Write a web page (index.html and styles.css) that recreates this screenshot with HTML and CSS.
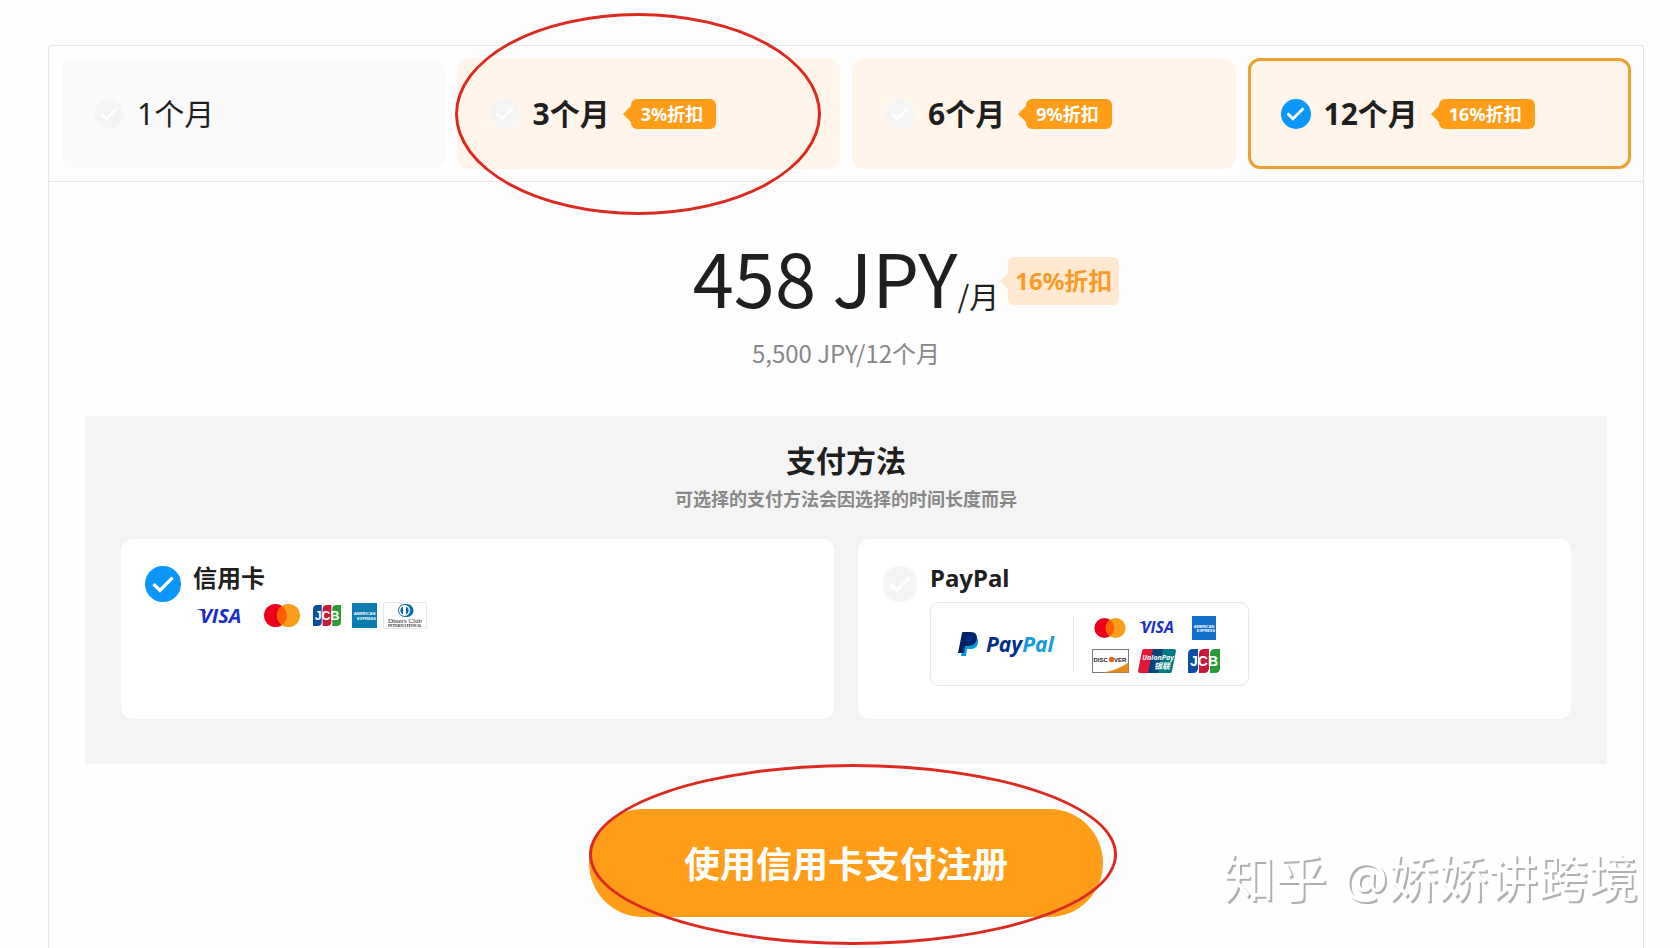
FILE: index.html
```html
<!DOCTYPE html>
<html lang="zh-CN">
<head>
  <meta charset="UTF-8" />
  <meta name="viewport" content="width=device-width, initial-scale=1">
  <title>支付方法</title>
  <link rel="stylesheet" href="styles.css">
</head>
<body>

  <!-- card brand logos, reused in both payment options -->
  <svg class="sprite" aria-hidden="true">
    <symbol id="visa" viewBox="0 0 48 16">
      <path d="M0 1h8l2 3-1 2C7 3 4 2 0 1z" fill="#1a2fc4" />
      <text x="4" y="15" class="visa-text">VISA</text>
    </symbol>
    <symbol id="mastercard" viewBox="0 0 36 23">
      <circle cx="11.5" cy="11.5" r="11.5" fill="#eb001b" />
      <circle cx="24.5" cy="11.5" r="11.5" fill="#f79e1b" />
      <path d="M18 2a11.5 11.5 0 0 1 0 19a11.5 11.5 0 0 1 0-19z" fill="#ff5f00" />
    </symbol>
    <symbol id="jcb" viewBox="0 0 32 24">
      <path d="M5 0h5v19q0 5-5 5H0V5q0-5 5-5z" fill="#0b4ea2" />
      <path d="M16 0h5v19q0 5-5 5h-5V5q0-5 5-5z" fill="#c8193c" />
      <path d="M27 0h5v19q0 5-5 5h-5V5q0-5 5-5z" fill="#2b9b3a" />
      <text x="16" y="17" text-anchor="middle" class="jcb-text">JCB</text>
    </symbol>
    <symbol id="amex" viewBox="0 0 25 25">
      <rect width="25" height="25" />
      <text x="12.5" y="12" text-anchor="middle" class="amex-text">AMERICAN</text>
      <text x="14.5" y="17" text-anchor="middle" class="amex-text">EXPRESS</text>
    </symbol>
    <symbol id="diners" viewBox="0 0 44 27">
      <rect x=".5" y=".5" width="43" height="26" rx="1" fill="#fff" stroke="#e6e6e6" />
      <path d="M21 2h3a6.500 6.500 0 0 1 0 13h-3z" fill="#0a6ba8" />
      <circle cx="21.500" cy="8.500" r="6" fill="#fff" stroke="#0a6ba8" />
      <path d="M20 4.500v8a4.300 4.300 0 0 1 0-8zM23 4.500v8a4.300 4.300 0 0 0 0-8z" fill="#0a6ba8" />
      <text x="22" y="20.500" text-anchor="middle" class="diners-text">Diners Club</text>
      <text x="22" y="25" text-anchor="middle" class="diners-small">INTERNATIONAL</text>
    </symbol>
    <symbol id="discover" viewBox="0 0 37 24">
      <rect x=".5" y=".5" width="36" height="23" fill="#fff" stroke="#777" />
      <path d="M36.500 13.500V23.500H11Q26 21 36.500 13.500z" fill="#e58a1c" />
      <text x="1.500" y="13" class="discover-text">DISC</text>
      <circle cx="19.500" cy="10.500" r="2.700" fill="#e8641b" />
      <text x="22" y="13" class="discover-text">VER</text>
    </symbol>
    <symbol id="unionpay" viewBox="0 0 38 24">
      <path d="M6 0h12l-5 24H2q-2 0-2-2L4 2q0-2 2-2z" fill="#e21836" />
      <path d="M15 0h12l-5 24H10z" fill="#00447c" />
      <path d="M25 0h11q2 0 2 2l-4 20q0 2-2 2H20z" fill="#007b84" />
      <text x="20" y="11" text-anchor="middle" class="union-text">UnionPay</text>
      <text x="24" y="20" text-anchor="middle" class="union-cn">银联</text>
    </symbol>
  </svg>

  <main class="panel">
    <div class="periods" role="radiogroup" aria-label="时间长度">
      <label class="period plain">
        <input type="radio" name="period" class="check">
        <span class="period-name">1个月</span>
      </label>
      <label class="period">
        <input type="radio" name="period" class="check">
        <span class="period-name">3个月</span>
        <span class="tag">3%折扣</span>
        <span class="ring ring-period"></span>
      </label>
      <label class="period">
        <input type="radio" name="period" class="check">
        <span class="period-name">6个月</span>
        <span class="tag">9%折扣</span>
      </label>
      <label class="period selected">
        <input type="radio" name="period" class="check" checked>
        <span class="period-name">12个月</span>
        <span class="tag">16%折扣</span>
      </label>
    </div>

    <div class="summary">
      <div class="price">
        458 JPY<span class="unit">/月</span>
        <span class="tag tag-light">16%折扣</span>
      </div>
      <div class="total">5,500 JPY/12个月</div>
    </div>

    <section class="payment">
      <h2>支付方法</h2>
      <p class="note">可选择的支付方法会因选择的时间长度而异</p>

      <div class="methods">
        <label class="method">
          <input type="radio" name="method" class="check check-large" checked>
          <span class="method-body">
            <span class="method-name">信用卡</span>
            <span class="cards">
              <svg class="logo visa"><use href="#visa" /></svg>
              <svg class="logo mastercard"><use href="#mastercard" /></svg>
              <svg class="logo jcb"><use href="#jcb" /></svg>
              <svg class="logo amex"><use href="#amex" /></svg>
              <svg class="logo diners"><use href="#diners" /></svg>
            </span>
          </span>
        </label>

        <label class="method">
          <input type="radio" name="method" class="check check-large">
          <span class="method-body">
            <span class="method-name">PayPal</span>
            <span class="paypal-box">
              <svg class="paypal-logo" viewBox="0 0 98 30">
                <path d="M7 7h8q6 1 5 7-1 6-8 6h-3l-1 7H3z" fill="#009cde" />
                <path d="M5 3h8q6 0 6 6-1 8-9 8H7l-1 7H0L4 4q0-1 1-1z" fill="#012169" />
                <path d="M9 7h4q2 0 2 3-1 3-4 3H8z" fill="#003087" />
                <text x="28" y="23" class="paypal-text"><tspan fill="#012f87">Pay</tspan><tspan fill="#139bdc">Pal</tspan></text>
              </svg>
              <span class="brands">
                <svg class="logo mastercard"><use href="#mastercard" /></svg>
                <svg class="logo visa"><use href="#visa" /></svg>
                <svg class="logo amex"><use href="#amex" /></svg>
                <svg class="logo discover"><use href="#discover" /></svg>
                <svg class="logo unionpay"><use href="#unionpay" /></svg>
                <svg class="logo jcb"><use href="#jcb" /></svg>
              </span>
            </span>
          </span>
        </label>
      </div>
    </section>

    <div class="action">
      <button type="submit" class="submit">使用信用卡支付注册</button>
      <span class="ring ring-submit"></span>
    </div>
  </main>

  <div class="watermark"><span class="site">知乎</span><span>@娇娇讲跨境</span></div>

</body>
</html>
```
FILE: styles.css
```css
* {
  box-sizing: border-box;
}

body {
  margin: 0;
  min-height: 100vh;
  padding: 45px 36px 0 48px;
  display: flex;
  position: relative;
  background: #fefefe;
  color: #1f1f1f;
  font-family: "Noto Sans", "Noto Sans CJK SC", sans-serif;
}

.sprite {
  display: none;
}

.panel {
  flex: 1;
  border: 1px solid #e6e6e6;
  border-bottom: none;
  border-radius: 3px 3px 0 0;
}

/* period tabs */
.periods {
  display: grid;
  grid-template-columns: repeat(4, 1fr);
  gap: 12px;
  padding: 12px;
  border-bottom: 1px solid #e6e6e6;
}

.period {
  position: relative;
  display: flex;
  align-items: center;
  height: 111px;
  padding: 0 30px;
  border: 3px solid transparent;
  border-radius: 12px;
  background: #fff5eb;
  font-size: 30px;
  font-weight: bold;
  line-height: 42px;
  cursor: pointer;
}

.period.plain {
  background: #fafafa;
  font-weight: normal;
}

.period.selected {
  border-color: #f0a030;
}

.period-name {
  margin-left: 13px;
}

.check {
  appearance: none;
  flex: none;
  display: grid;
  place-items: center;
  width: 30px;
  height: 30px;
  margin: 0;
  border-radius: 50%;
  background: #f5f5f5;
  cursor: pointer;
}

.check::before {
  content: "";
  width: 60%;
  height: 60%;
  background: #fff;
  clip-path: polygon(0 56%, 11% 45%, 36% 68%, 89% 15%, 100% 26%, 36% 90%);
}

.check:checked {
  background: #0a96fa;
}

.check-large {
  width: 36px;
  height: 36px;
  margin-top: 5px;
}

.tag {
  position: relative;
  margin-left: 21px;
  padding: 0 13px 0 10px;
  border-radius: 6px;
  background: #ff9d19;
  color: #fff;
  font-size: 18px;
  font-weight: bold;
  line-height: 30px;
}

.tag::before {
  content: "";
  position: absolute;
  right: 100%;
  top: 50%;
  margin-top: -8px;
  border: 8px solid transparent;
  border-left: none;
  border-right-color: #ff9d19;
}

/* price */
.summary {
  padding: 46px 0 45px;
  font-family: "Noto Sans CJK SC", sans-serif;
  text-align: center;
}

.price {
  position: relative;
  width: fit-content;
  margin: 0 auto;
  font-size: 74px;
  line-height: 96px;
}

.unit {
  font-size: 30px;
  line-height: 1;
}

.tag-light {
  position: absolute;
  left: 100%;
  top: 29px;
  margin-left: 9px;
  padding: 0 7px;
  background: #ffe9d0;
  color: #f79d27;
  font-family: "Noto Sans", "Noto Sans CJK SC", sans-serif;
  font-size: 24px;
  line-height: 48px;
  white-space: nowrap;
}

.tag-light::before {
  border-right-color: #ffe9d0;
}

.total {
  margin-top: 11px;
  color: #888;
  font-size: 24px;
  line-height: 36px;
}

/* payment methods */
.payment {
  margin: 0 36px;
  padding: 24px 36px 45px;
  background: #f4f4f4;
  text-align: center;
}

.payment h2 {
  margin: 0;
  font-size: 30px;
  line-height: 42px;
}

.note {
  margin: 4px 0 26px;
  color: #888;
  font-size: 18px;
  font-weight: bold;
  line-height: 27px;
}

.methods {
  display: grid;
  grid-template-columns: 1fr 1fr;
  gap: 24px;
  text-align: left;
}

.method {
  display: flex;
  gap: 12px;
  min-height: 180px;
  padding: 22px 24px;
  border-radius: 12px;
  background: #fff;
  cursor: pointer;
}

.method-body {
  display: flex;
  flex-direction: column;
  gap: 7px;
}

.method-name {
  font-size: 24px;
  font-weight: bold;
  line-height: 34px;
}

.logo {
  flex: none;
}

.cards {
  display: flex;
  align-items: center;
  gap: 12px;
  height: 27px;
}

.cards .visa { width: 48px; height: 16px; margin: 0 8px 0 3px; }
.cards .mastercard { width: 36px; height: 23px; }
.cards .jcb { width: 28px; height: 21px; margin-left: 1px; }
.cards .amex { width: 25px; height: 25px; margin-left: -1px; fill: #0a7cb0; }
.cards .diners { width: 44px; height: 27px; margin-left: -6px; }

.paypal-box {
  display: flex;
  align-items: center;
  width: 319px;
  height: 84px;
  padding-left: 27px;
  border: 1px solid #e8e8e8;
  border-radius: 9px;
}

.paypal-logo {
  flex: none;
  width: 98px;
  height: 30px;
}

.brands {
  display: grid;
  grid-template-columns: repeat(3, 38px);
  grid-template-rows: 24px 24px;
  gap: 9px;
  place-items: center;
  margin-left: 17px;
  padding-left: 17px;
  border-left: 1px solid #e6e6e6;
}

.brands .mastercard { width: 32px; height: 20px; }
.brands .visa { width: 38px; height: 13px; }
.brands .amex { width: 24px; height: 24px; fill: #0f6fc9; }
.brands .discover { width: 37px; height: 24px; }
.brands .unionpay { width: 38px; height: 24px; }
.brands .jcb { width: 32px; height: 24px; }

.visa-text { font: italic bold 20px "Open Sans", sans-serif; fill: #1a2fc4; }
.jcb-text { font: bold 14px "Liberation Sans", sans-serif; fill: #fff; }
.amex-text { font: bold 4px "Liberation Sans", sans-serif; fill: #fff; }
.diners-text { font: 7px "Liberation Serif", serif; fill: #222; }
.diners-small { font: bold 4px "Liberation Serif", serif; fill: #222; }
.discover-text { font: bold 6px "Liberation Sans", sans-serif; fill: #222; }
.union-text { font: italic bold 7px "Open Sans", sans-serif; fill: #fff; }
.union-cn { font: italic bold 8px "Noto Sans CJK SC", sans-serif; fill: #fff; }
.paypal-text { font: italic bold 21px "Open Sans", sans-serif; }

/* submit */
.action {
  position: relative;
  width: fit-content;
  margin: 45px auto 30px;
}

.submit {
  display: block;
  padding: 4px 95px 0;
  border: none;
  border-radius: 54px;
  background: #ff9d19;
  color: #fff;
  font-family: inherit;
  font-size: 36px;
  font-weight: bold;
  line-height: 104px;
  cursor: pointer;
}

/* hand-drawn highlights */
.ring {
  position: absolute;
  border: 3px solid #dd2a20;
  border-radius: 50%;
  pointer-events: none;
}

.ring-period {
  z-index: 1;
  left: -5px;
  top: -48px;
  width: 366px;
  height: 202px;
}

.ring-submit {
  left: 0;
  top: -45px;
  width: 528px;
  height: 181px;
}

.watermark {
  position: absolute;
  right: 42px;
  bottom: 37px;
  display: flex;
  align-items: center;
  gap: 16px;
  color: #fff;
  font-size: 50px;
  line-height: 66px;
  text-shadow: 2px 2px 0 #b0b0b0;
}

.watermark .site {
  font-size: 52px;
}
```
